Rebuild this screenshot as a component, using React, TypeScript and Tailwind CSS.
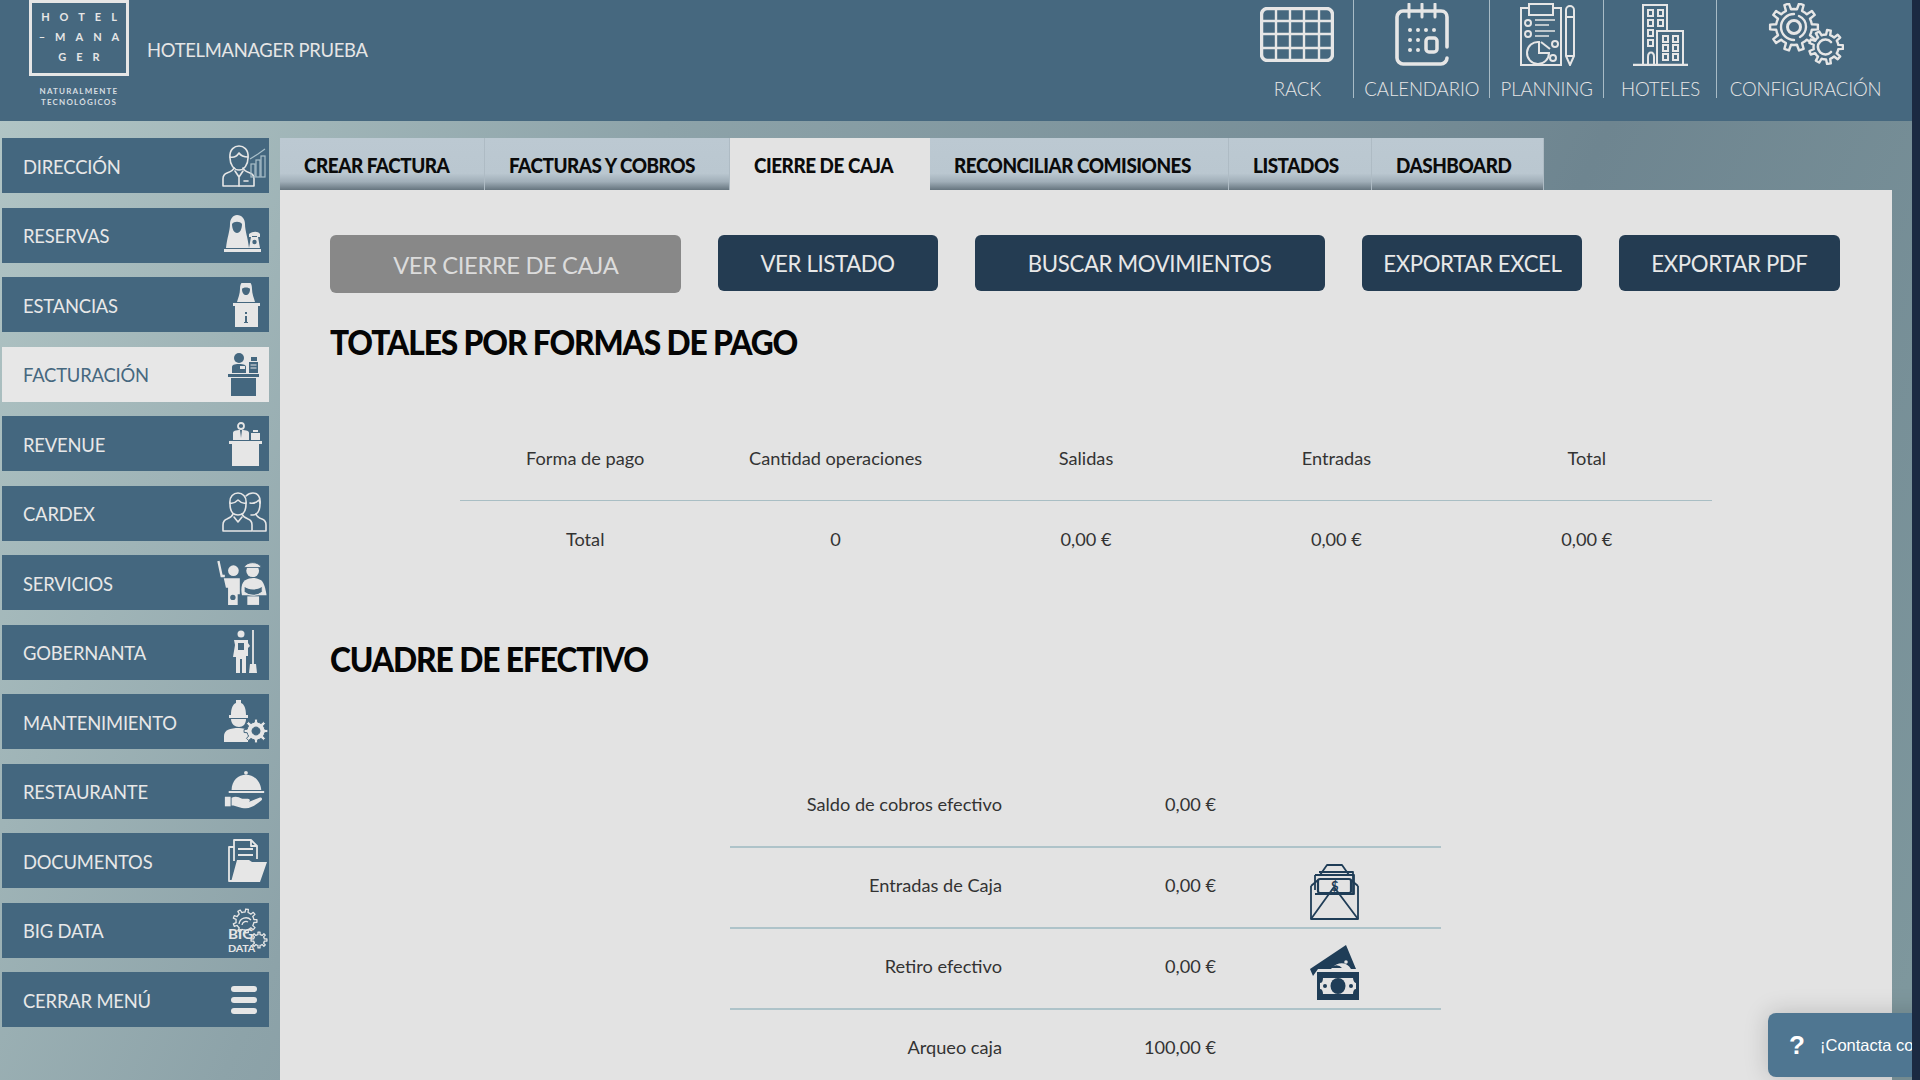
import React from "react";

const gear = (cx: number, cy: number, r: number, teeth: number, depth: number) => {
  const pts: string[] = [];
  const step = (Math.PI * 2) / teeth;
  for (let i = 0; i < teeth; i++) {
    const a = i * step;
    const list: [number, number][] = [
      [a - step * 0.5, r - depth],
      [a - step * 0.24, r - depth],
      [a - step * 0.16, r],
      [a + step * 0.16, r],
      [a + step * 0.24, r - depth],
    ];
    list.forEach(([t, q]) => pts.push(`${(cx + Math.cos(t) * q).toFixed(2)},${(cy + Math.sin(t) * q).toFixed(2)}`));
  }
  return `M${pts.join("L")}Z`;
};

const C = "#e6e6e6";
const S = (p: { w: number; h: number; vb?: string; children: React.ReactNode }) => (
  <svg width={p.w} height={p.h} viewBox={p.vb ?? `0 0 ${p.w} ${p.h}`} fill="none" className="block shrink-0">
    {p.children}
  </svg>
);

const IDireccion = () => (
  <S w={46} h={44}>
    <g stroke={C} strokeWidth="1.6" strokeLinejoin="round" strokeLinecap="round">
      <path d="M8 14C7 5 13 2 17 2s10 3 9 12c0 7-4 12-9 12S8 21 8 14Z" />
      <path d="M8 13c4 1 7-1 9-4 2 3 5 4 9 4" />
      <path d="M12 24c-1 3-4 4-7 5-3 1-4 3-4 6v7h31v-7c0-3-1-5-4-6-3-1-6-2-7-5" />
      <path d="M13 27l4 6 4-6M17 33v9" />
      <path d="M22 37h4" />
    </g>
    <g stroke="#a9bfc9" strokeWidth="1.2">
      <rect x="29" y="20" width="4" height="13" />
      <rect x="34" y="16" width="4" height="17" />
      <rect x="39" y="12" width="4" height="21" />
      <path d="M28 15l8-5 7-5" />
    </g>
  </S>
);
const IReservas = () => (
  <S w={46} h={44} vb="-1 0 46 44">
    <path d="M14 2c5 0 8 4 8 9 0 7 3 14 4 24H3c1-10 4-17 4-24 0-5 3-9 7-9Z" fill={C} />
    <path d="M9 11c2-3 8-3 10 0 0 5-2 9-5 9s-5-4-5-9Z" fill="#46687f" />
    <path d="M1 36h37v3H1z" fill={C} />
    <path d="M26 21c4-3 9-3 11 0v3h-3v-1h-5v1h-3Z" fill={C} />
    <path d="M28 24h7l2 11H26Z" fill={C} />
    <circle cx="31.500" cy="29" r="2.200" fill="#46687f" />
  </S>
);
const IEstancias = () => (
  <S w={46} h={44} vb="2 0 46 44">
    <path d="M26 -2c5 0 6 4 6 8 0 5 2 9 3 13H17c1-4 3-8 3-13 0-4 1-8 6-8Z" fill={C} />
    <path d="M22 6c1-2 7-2 8 0 0 4-2 6-4 6s-4-2-4-6Z" fill="#46687f" />
    <path d="M13 20h27v3h-2v21H15V23h-2Z" fill={C} />
    <path d="M25 29h2v2h-2ZM25 33h2v6h1v1h-4v-1h1Z" fill="#46687f" />
  </S>
);
const IFacturacion = () => {
  const D = "#44677f";
  return (
    <S w={46} h={44}>
      <circle cx="17" cy="6" r="5" fill={D} />
      <path d="M10 21v-6c0-2 2-3 7-3s7 1 7 3v6Z" fill={D} />
      <path d="M18 14h5v3h-5Z" fill="#e7e7e7" />
      <path d="M27 10h9v11h-9ZM29 5h6v4h-6Z" fill={D} />
      <path d="M28.500 13h6M28.500 16h6" stroke="#e7e7e7" strokeWidth="1" />
      <path d="M6 22h31v3H6Z" fill={D} />
      <path d="M9 26h25v18H9Z" fill={D} />
    </S>
  );
};
const IRevenue = () => (
  <S w={46} h={44}>
    <circle cx="19" cy="4" r="3" stroke={C} strokeWidth="1.800" />
    <path d="M11 18v-7c0-2 2-3 8-3s8 1 8 3v7Z" fill={C} />
    <path d="M18 8l1 8 1-8Z" fill="#46687f" />
    <path d="M29 11h9v7h-9Z" fill={C} />
    <path d="M31 8h5v2h-5Z" fill={C} />
    <path d="M7 19h33v3h-3v22H10V22H7Z" fill={C} />
  </S>
);
const ICardex = () => (
  <S w={46} h={44}>
    <g stroke={C} strokeWidth="1.600" strokeLinejoin="round" strokeLinecap="round">
      <path d="M8 13C7 5 12 2 16 2s9 3 8 11c0 7-3 11-8 11s-8-4-8-11Z" />
      <path d="M8 12c4 1 6-1 8-3 2 2 4 4 8 3" />
      <path d="M11 23c-1 3-4 4-6 5-3 1-4 3-4 6v6h29v-6c0-3-1-5-4-6-2-1-5-2-6-5" />
      <path d="M12 26l4 5 4-5" />
      <path d="M24 5c2-2 4-3 7-3 4 0 8 3 7 11 0 7-3 11-7 11h-2" />
      <path d="M28 12c4 1 7-1 9-3l1 3" />
      <path d="M34 23c1 3 3 4 6 5 3 1 4 3 4 6v6H31" />
    </g>
  </S>
);
const IServicios = () => (
  <S w={51} h={46} vb="0 0 47 43">
    <path d="M1 1l3 14h3" stroke={C} strokeWidth="2.200" />
    <circle cx="15" cy="10" r="5" fill={C} />
    <path d="M6 17h15v15h-2v10h-9V26H8Z" fill={C} />
    <circle cx="14.500" cy="35" r="2.500" fill="#46687f" />
    <circle cx="33" cy="10" r="6" fill={C} />
    <path d="M25 7c2-6 14-6 16 0Z" fill={C} stroke="#46687f" strokeWidth=".8" />
    <path d="M26 19c5-3 10-3 15 0 3 3 4 8 5 14H23c-1-5-1-11 3-14Z" fill={C} />
    <path d="M25 24c4 4 13 4 17 0v6c-5 4-12 4-17 0Z" fill="#46687f" stroke={C} />
    <path d="M28 34h11v8H28Z" fill={C} />
  </S>
);
const IGobernanta = () => (
  <S w={46} h={44} vb="5 0 46 44">
    <circle cx="24" cy="4" r="3.500" fill={C} />
    <path d="M17 10h14v3l2 3-2 2v8h-2v17h-4V29h-2v14h-4V27h-3l2-12Z" fill={C} />
    <path d="M21 13h6v7h-6Z" fill="#46687f" />
    <path d="M36 0v34" stroke={C} strokeWidth="1.800" />
    <path d="M33 34h6l1 9h-8Z" fill={C} />
  </S>
);
const IMantenimiento = () => (
  <S w={46} h={44} vb="-1 0 46 44">
    <path d="M8 15C8 8 10 4 13 3V0h5v3c3 1 5 5 5 12h2v3H6v-3Z" fill={C} />
    <path d="M8 19h15c0 5-3 8-7 8s-8-3-8-8Z" fill={C} />
    <path d="M1 42v-6c0-6 6-8 15-8 4 0 7 1 9 2v12Z" fill={C} />
    <path fillRule="evenodd" d={gear(33, 31, 12, 8, 3) + " M33 27a4 4 0 1 0 .01 0Z"} fill={C} stroke="#46687f" strokeWidth="1" />
  </S>
);
const IRestaurante = () => (
  <S w={46} h={44} vb="-2 0 48 44">
    <circle cx="23" cy="3" r="2" fill={C} />
    <path d="M8 21C8 11 15 5 23 5s15 6 16 16Z" fill={C} />
    <path d="M5 22h37v2H5Z" fill={C} />
    <path d="M1 28h6v10H1Z" fill={C} />
    <path d="M8 29c4-2 7-1 11 1h6c2 0 3 2 1 3h-7 8l10-4c2-1 4 1 2 3-5 4-10 8-16 8-6 0-10-3-15-3Z" fill={C} />
  </S>
);
const IDocumentos = () => (
  <S w={46} h={44} vb="-3 0 46 44">
    <g stroke={C} strokeWidth="1.800" strokeLinejoin="round">
      <path d="M9 8H4v34h6" />
      <path d="M9 22V1h17l6 6v13" />
      <path d="M26 1v6h6" />
      <path d="M13 10h15M13 16h15" />
    </g>
    <path d="M6 43l6-22h12l3 2h15l-7 20Z" fill={C} />
  </S>
);
const IBigData = () => (
  <S w={46} h={44}>
    <path d={gear(23, 13, 12, 9, 3)} stroke={C} strokeWidth="1.300" strokeLinejoin="round" />
    <path d="M17 16a7 7 0 0 1 12-4M20 17a4 4 0 0 1 6-3" stroke={C} strokeWidth="1.300" />
    <path d={gear(37, 32, 8, 8, 2.500)} stroke={C} strokeWidth="1.300" strokeLinejoin="round" fill="#46687f" />
    <text x="6" y="31" fontFamily="Lato, sans-serif" fontWeight="700" fontSize="14" fill={C} textLength="25" lengthAdjust="spacingAndGlyphs">BIG</text>
    <text x="6" y="43.500" fontFamily="Lato, sans-serif" fontSize="10" fontWeight="700" fill={C} textLength="27" lengthAdjust="spacingAndGlyphs">DATA</text>
  </S>
);
const IMenu = () => (
  <div className="mr-[11px] flex w-[26px] flex-col gap-[5px]">
    <div className="h-[6px] rounded-full bg-[#e6e6e6]" />
    <div className="h-[6px] rounded-full bg-[#e6e6e6]" />
    <div className="h-[6px] rounded-full bg-[#e6e6e6]" />
  </div>
);

const IRack = () => (
  <svg width="74" height="55" viewBox="0 0 74 55" fill="none" className="block">
    <rect x="1.500" y="1.500" width="71" height="52" rx="6" stroke={C} strokeWidth="3.500" />
    <path d="M1 14h72M1 27h72M1 41h72M16 1v53M30 1v53M44 1v53M59 1v53" stroke={C} strokeWidth="2.400" />
  </svg>
);
const ICalendario = () => (
  <svg width="54" height="63" viewBox="0 0 54 63" fill="none" className="block">
    <path d="M52 44V14c0-3-2-6-6-6H8c-3 0-6 3-6 6v41c0 3 3 6 6 6h38c3 0 6-3 6-6" stroke={C} strokeWidth="3.600" strokeLinecap="round" />
    <path d="M14 1v13M27 1v13M40 1v13" stroke={C} strokeWidth="3" strokeLinecap="round" />
    <g fill={C}>
      {[[15, 27], [23, 27], [31, 27], [39, 27], [15, 37], [23, 37], [15, 47], [23, 47]].map(([x, y]) => (
        <circle key={`${x}-${y}`} cx={x} cy={y} r="2" />
      ))}
    </g>
    <rect x="31" y="35" width="11" height="14" rx="3" stroke={C} strokeWidth="3.500" />
  </svg>
);
const IPlanning = () => (
  <svg width="56" height="64" viewBox="0 0 56 64" fill="none" className="block">
    <g stroke={C} strokeWidth="2">
      <path d="M10 6H2v57h40V6h-8" />
      <path d="M10 2h24v11H10z" />
      <circle cx="9" cy="21" r="3" />
      <circle cx="9" cy="32" r="3" />
      <path d="M16 18h20M16 23h14M16 29h20M16 34h14" strokeWidth="1.700" />
      <path d="M20 40a11 11 0 1 0 10 11H20Z" />
      <path d="M22 40l9 7" />
      <circle cx="36" cy="42" r="3" />
      <circle cx="34" cy="56" r="3" />
      <path d="M47 8a4 4 0 0 1 8 0v46l-4 9-4-9Z" />
      <path d="M47 15h8M47 54h8" />
    </g>
  </svg>
);
const IHoteles = () => (
  <svg width="55" height="63" viewBox="0 0 55 63" fill="none" className="block">
    <g stroke={C} strokeWidth="2">
      <path d="M10 62V2h24v26" />
      <path d="M24 62V28h26v34" />
      <path d="M0 62h55" strokeWidth="2.600" />
      <path d="M15 54c0-6 6-6 6 0v8h-6z" />
      {[7, 17, 27, 37].map((y) => (
        <React.Fragment key={y}>
          <rect x="15" y={y} width="5" height="6" />
          {y < 20 && <rect x="25" y={y} width="5" height="6" />}
        </React.Fragment>
      ))}
      {[33, 42, 51].map((y) => (
        <React.Fragment key={y}>
          <rect x="30" y={y} width="5" height="6" />
          <rect x="40" y={y} width="5" height="6" />
        </React.Fragment>
      ))}
    </g>
  </svg>
);
const IConfig = () => (
  <svg width="76" height="62" viewBox="0 0 76 62" fill="none" className="block">
    <g stroke={C} strokeWidth="2.400" strokeLinejoin="round" strokeLinecap="round">
      <path d={gear(26, 24, 24, 10, 6)} />
      <path d="M26 11a13 13 0 0 0 0 26M38 24a12 12 0 0 0-7-11M38 24a12 12 0 0 1-6 10" />
      <circle cx="26" cy="24" r="6.500" strokeWidth="3" />
      <path d={gear(58, 44, 17, 9, 4.500)} fill="#46687f" />
      <path d="M63 39a7.500 7.500 0 1 0 0 10" strokeWidth="2.600" />
    </g>
  </svg>
);

const IEnvelope = () => (
  <svg width="49" height="56" viewBox="0 0 49 56" fill="none" className="block">
    <g stroke="#1f3d57" strokeWidth="1.800" strokeLinejoin="round">
      <path d="M1 22v33h47V22" />
      <path d="M1 55l23-32 24 32" />
      <path d="M1 22l7-6M48 22l-7-6" />
      <path d="M10 11l7-10h15l7 10" />
      <path d="M5 11h39v19H5M5 11v15" />
      <path d="M9 8h34v22" />
      <rect x="8" y="15" width="33" height="14" rx="2" strokeWidth="2.200" />
    </g>
    <text x="21" y="27" fontFamily="Lato, sans-serif" fontWeight="700" fontSize="13" fill="#1f3d57">$</text>
  </svg>
);
const ICash = () => (
  <svg width="49" height="55" viewBox="0 0 49 55" fill="none" className="block">
    <path d="M0 24L36 0l10 24h-5c-4-7-13-8-20 0H8L3 31Z" fill="#1f3d57" />
    <path d="M21 23a7 7 0 0 1 11 0Z" fill="#1f3d57" />
    <circle cx="36" cy="17" r="1.800" fill="#e3e3e3" />
    <path d="M7 27h42v28H7Z" fill="#1f3d57" />
    <path d="M13 33h30c0 3 2 5 3 5v6c-2 0-3 2-3 5H13c0-3-1-5-3-5v-6c2 0 3-2 3-5Z" fill="#e3e3e3" />
    <ellipse cx="28" cy="41" rx="7.500" ry="8" fill="#1f3d57" />
    <circle cx="15" cy="41" r="2" fill="#1f3d57" />
    <circle cx="41" cy="41" r="2" fill="#1f3d57" />
  </svg>
);

const menu: [string, React.FC][] = [
  ["DIRECCIÓN", IDireccion],
  ["RESERVAS", IReservas],
  ["ESTANCIAS", IEstancias],
  ["FACTURACIÓN", IFacturacion],
  ["REVENUE", IRevenue],
  ["CARDEX", ICardex],
  ["SERVICIOS", IServicios],
  ["GOBERNANTA", IGobernanta],
  ["MANTENIMIENTO", IMantenimiento],
  ["RESTAURANTE", IRestaurante],
  ["DOCUMENTOS", IDocumentos],
  ["BIG DATA", IBigData],
  ["CERRAR MENÚ", IMenu],
];

const tabs: [string, string, boolean][] = [
  ["CREAR FACTURA", "w-[205px]", false],
  ["FACTURAS Y COBROS", "w-[245px]", false],
  ["CIERRE DE CAJA", "w-[200px]", true],
  ["RECONCILIAR COMISIONES", "w-[299px]", false],
  ["LISTADOS", "w-[143px]", false],
  ["DASHBOARD", "w-[172px]", false],
];

const nav: [string, string, React.FC][] = [
  ["RACK", "w-[112px]", IRack],
  ["CALENDARIO", "w-[136px]", ICalendario],
  ["PLANNING", "w-[114px]", IPlanning],
  ["HOTELES", "w-[113px]", IHoteles],
  ["CONFIGURACIÓN", "w-[178px]", IConfig],
];

const buttons: [string, string][] = [
  ["VER LISTADO", "w-[220px]"],
  ["BUSCAR MOVIMIENTOS", "w-[350px]"],
  ["EXPORTAR EXCEL", "w-[220px]"],
  ["EXPORTAR PDF", "w-[221px]"],
];

export default function App() {
  return (
    <div className="flex h-[1080px] w-[1920px] overflow-hidden bg-[#1b2a42] font-['Lato',sans-serif]">
      <div className="relative h-full w-[1912px] shrink-0 overflow-hidden bg-[linear-gradient(115deg,#b1c5c5_2%,#8da3a9_30%,#6e8590_69%,#7e979d_98%)]">
        <header className="flex h-[121px] items-start bg-[#46687f] text-[#e6e6e6]">
          <div className="ml-[29px] w-[100px]">
            <div className="flex h-[76px] flex-col items-center gap-[8px] whitespace-nowrap border-[3px] border-[#e6e6e6] pt-[8px] text-[11px] font-bold leading-[12px]">
              <span className="pl-[10px] tracking-[10px]">HOTEL</span>
              <span className="pl-[10px] tracking-[10px]">–MANA</span>
              <span className="pl-[10px] tracking-[10px]">GER</span>
            </div>
            <div className="mt-[10px] whitespace-nowrap text-center text-[8px] font-bold leading-[11px] tracking-[1.2px] text-[#d6dde1]">
              NATURALMENTE
              <br />
              TECNOLÓGICOS
            </div>
          </div>
          <div className="ml-[18px] mt-[37px] origin-left scale-x-[0.92] whitespace-nowrap text-[20px] leading-[24px] tracking-[-0.3px]">HOTELMANAGER PRUEBA</div>
          <nav className="ml-auto mr-[18px] flex">
            {nav.map(([label, w, Icon], i) => (
              <div key={label} className={`${w} flex h-[98px] flex-col items-center ${i > 0 ? "border-l border-[#a8bbc6]" : ""}`}>
                <div className="flex h-[76px] shrink-0 items-center pb-[8px]">
                  <Icon />
                </div>
                <span className="inline-block shrink-0 scale-x-[0.93] whitespace-nowrap text-[20px] font-light leading-[24px] tracking-[-0.1px]">{label}</span>
              </div>
            ))}
          </nav>
        </header>

        <div className="flex">
          <aside className="flex w-[280px] shrink-0 flex-col gap-[14.500px] pl-[2px] pr-[11px] pt-[17px]">
            {menu.map(([label, Icon]) => {
              const active = label === "FACTURACIÓN";
              return (
                <div
                  key={label}
                  className={`flex h-[55px] items-center justify-between pl-[21px] pr-[1px] text-[20px] leading-none tracking-[-0.2px] ${
                    active ? "bg-[#e7e7e7] text-[#46687f]" : "bg-[#44677f] text-[#e8e8e8]"
                  }`}
                >
                  <span className="inline-block origin-left scale-x-[0.92] whitespace-nowrap">{label}</span>
                  <Icon />
                </div>
              );
            })}
          </aside>

          <main className="w-[1612px] shrink-0 pt-[17px]">
            <div className="flex h-[52px]">
              {tabs.map(([label, w, active]) => (
                <div
                  key={label}
                  className={`${w} flex items-center pl-[24px] pt-[2px] text-[20px] font-black leading-none tracking-[-0.5px] text-[#0b0b0b] ${
                    active
                      ? "bg-[#e3e3e3]"
                      : "border-r border-[#aebbc4] bg-[linear-gradient(180deg,#bcc9d2_0%,#bac7d0_68%,#a0aeb8_84%,#66757f_100%)]"
                  }`}
                >
                  <span className="inline-block origin-left scale-x-[0.945] whitespace-nowrap">{label}</span>
                </div>
              ))}
            </div>

            <div className="h-[890px] bg-[#e3e3e3] pl-[50px] pr-[52px] pt-[45px]">
              <div className="flex items-start gap-[37px] text-[24px] leading-none tracking-[-0.4px] text-[#e8e8e8]">
                <button className="flex h-[58px] w-[351px] items-center justify-center rounded-[6px] bg-[#888888] pt-[2px] text-[#dcdcdc]">
                  <span className="inline-block scale-x-[0.99] whitespace-nowrap">VER CIERRE DE CAJA</span>
                </button>
                {buttons.map(([label, w]) => (
                  <button key={label} className={`${w} flex h-[56px] items-center justify-center rounded-[6px] bg-[#243c52]`}>
                    <span className="inline-block scale-x-[0.925] whitespace-nowrap">{label}</span>
                  </button>
                ))}
              </div>

              <h2 className="mt-[29px] h-[40px] origin-left scale-x-[0.933] whitespace-nowrap text-[34px] font-black leading-[40px] tracking-[-1.200px] text-[#050505]">TOTALES POR FORMAS DE PAGO</h2>

              <div className="ml-[130px] mt-[54px] w-[1252px] text-[18.200px] leading-none text-[#333]">
                <div className="grid h-[85px] grid-cols-5 items-center border-b border-[#a9bec4] text-center">
                  <span>Forma de pago</span>
                  <span>Cantidad operaciones</span>
                  <span>Salidas</span>
                  <span>Entradas</span>
                  <span>Total</span>
                </div>
                <div className="grid h-[77px] grid-cols-5 items-center text-center">
                  <span>Total</span>
                  <span>0</span>
                  <span>0,00 €</span>
                  <span>0,00 €</span>
                  <span>0,00 €</span>
                </div>
              </div>

              <h2 className="mt-[61px] h-[40px] origin-left scale-x-[0.935] whitespace-nowrap text-[34px] font-black leading-[40px] tracking-[-1.200px] text-[#050505]">CUADRE DE EFECTIVO</h2>

              <div className="ml-[400px] mt-[88px] w-[711px] text-[18.200px] leading-none text-[#333]">
                {[
                  ["Saldo de cobros efectivo", "0,00 €", null],
                  ["Entradas de Caja", "0,00 €", <IEnvelope key="e" />],
                  ["Retiro efectivo", "0,00 €", <ICash key="c" />],
                  ["Arqueo caja", "100,00 €", null],
                ].map(([l, v, icon], i) => (
                  <div key={l as string} className={`flex h-[81px] items-center ${i < 3 ? "border-b-2 border-[#aec3c9]" : ""}`}>
                    <span className={`w-[272px] text-right ${i < 3 ? "pb-[5px]" : "pb-[6px]"}`}>{l}</span>
                    <span className={`w-[214px] text-right ${i < 3 ? "pb-[5px]" : "pb-[6px]"}`}>{v}</span>
                    <span className="ml-[94px] mt-[8px]">{icon}</span>
                  </div>
                ))}
              </div>
            </div>
          </main>
        </div>

        <div className="absolute left-[1768px] top-[1013px] flex h-[64px] w-[200px] items-center rounded-[8px] bg-[#4f7691] pl-[21px] font-['Liberation_Sans',sans-serif] text-white shadow-[0_0_24px_rgba(0,0,0,0.18)]">
          <span className="w-[31px] shrink-0 text-[26px] font-bold leading-none">?</span>
          <span className="whitespace-nowrap text-[16.500px] leading-none">¡Contacta con nosotros!</span>
        </div>
      </div>
    </div>
  );
}
